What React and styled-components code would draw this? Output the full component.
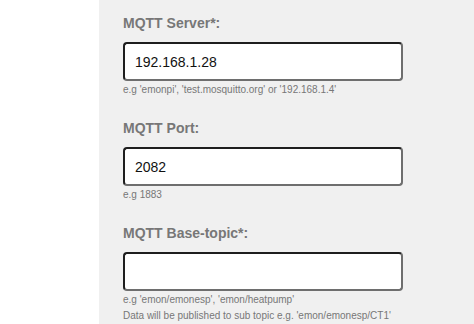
import React from 'react';
import styled, {createGlobalStyle} from 'styled-components';

const GlobalStyle = createGlobalStyle`
  html, body {
    margin: 0;
    padding: 0;
    background: #ffffff;
    font-family: "Liberation Sans", Arial, sans-serif;
  }
`;

const fields = [
    {label: 'MQTT Server*:', value: '192.168.1.28', hints: ["e.g 'emonpi', 'test.mosquitto.org' or '192.168.1.4'"]},
    {label: 'MQTT Port:', value: '2082', hints: ['e.g 1883']},
    {label: 'MQTT Base-topic*:', value: '', hints: ["e.g 'emon/emonesp', 'emon/heatpump'", "Data will be published to sub topic e.g. 'emon/emonesp/CT1'"]},
];

export default function App() {
    return <>
        <GlobalStyle/>
        <Page>
            <Side/>
            <Panel>
                {fields.map((f) => (
                    <Field key={f.label}>
                        <Label>{f.label}</Label>
                        <Input type="text" defaultValue={f.value}/>
                        {f.hints.map((h) => <Hint key={h}>{h}</Hint>)}
                    </Field>
                ))}
            </Panel>
        </Page>
    </>
}

const Page = styled.div`
    display: flex;
    height: 324px;
    overflow: hidden;
`

const Side = styled.div`
    width: 99px;
    flex-shrink: 0;
    background: #ffffff;
`

const Panel = styled.div`
    flex: 1;
    background: #f0f0f0;
    padding: 15px 0 0 24px;
`

const Field = styled.div`
    display: flex;
    flex-direction: column;
    align-items: flex-start;
    margin-bottom: 22px;
`

const Label = styled.div`
    font-size: 14px;
    font-weight: bold;
    line-height: 16px;
    color: #777777;
    margin-bottom: 11px;
`

const Input = styled.input`
    box-sizing: border-box;
    width: 280px;
    height: 39px;
    margin: 0 0 1px 0;
    padding: 0 10px;
    font-family: "Liberation Sans", Arial, sans-serif;
    font-size: 14px;
    color: #111111;
    background: #ffffff;
    border: 2px solid;
    border-color: #1e1e1e #6e6e6e #6e6e6e #1e1e1e;
    border-radius: 4px;
    outline: none;
`

const Hint = styled.div`
    font-size: 10px;
    line-height: 16px;
    color: #777777;
`
